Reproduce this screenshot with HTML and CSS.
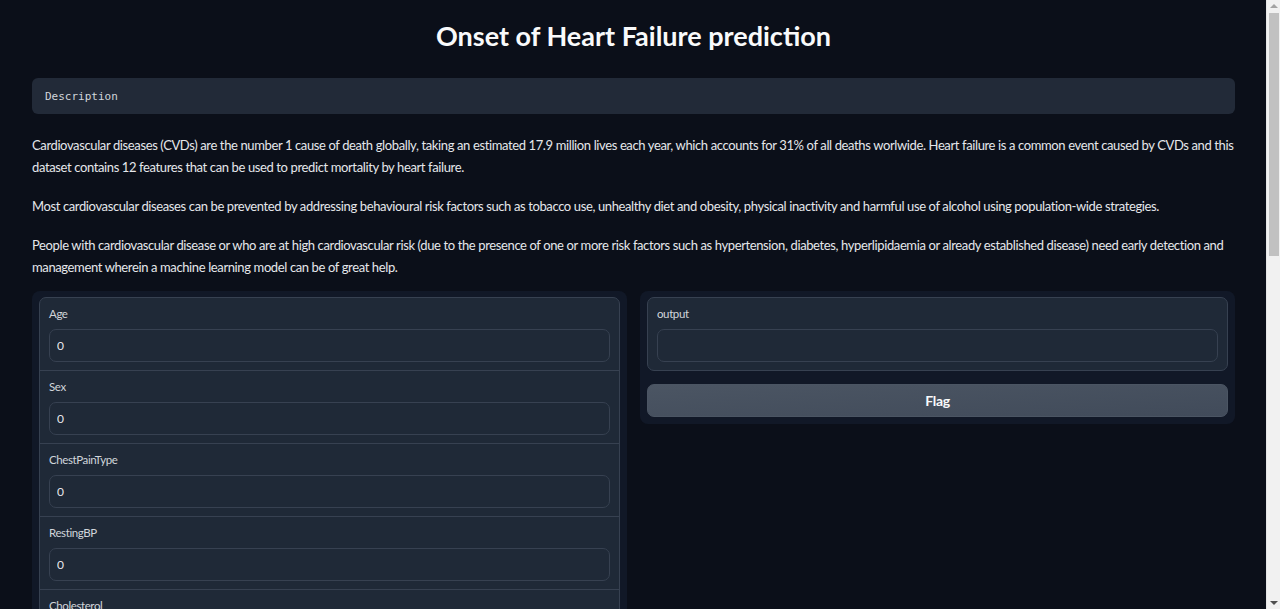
FILE: index.html
```html
<!DOCTYPE html>
<html lang="en">
<head>
<meta charset="utf-8">
<title>Onset of Heart Failure prediction</title>
<link rel="stylesheet" href="styles.css">
</head>
<body>
<div class="app">
  <h1 class="title">Onset of Heart Failure prediction</h1>
  <div class="desc-box">Description</div>
  <div class="article">
    <p>Cardiovascular diseases (CVDs) are the number 1 cause of death globally, taking an estimated 17.9 million lives each year, which accounts for 31% of all deaths worlwide. Heart failure is a common event caused by CVDs and this dataset contains 12 features that can be used to predict mortality by heart failure.</p>
    <p>Most cardiovascular diseases can be prevented by addressing behavioural risk factors such as tobacco use, unhealthy diet and obesity, physical inactivity and harmful use of alcohol using population-wide strategies.</p>
    <p>People with cardiovascular disease or who are at high cardiovascular risk (due to the presence of one or more risk factors such as hypertension, diabetes, hyperlipidaemia or already established disease) need early detection and management wherein a machine learning model can be of great help.</p>
  </div>
  <div class="columns">
    <div class="panel">
      <div class="form">
        <label class="field"><span class="label">Age</span><input class="input" type="text" value="0"></label>
        <label class="field"><span class="label">Sex</span><input class="input" type="text" value="0"></label>
        <label class="field"><span class="label">ChestPainType</span><input class="input" type="text" value="0"></label>
        <label class="field"><span class="label">RestingBP</span><input class="input" type="text" value="0"></label>
        <label class="field"><span class="label">Cholesterol</span><input class="input" type="text" value="0"></label>
        <label class="field"><span class="label">FastingBS</span><input class="input" type="text" value="0"></label>
      </div>
    </div>
    <div class="panel panel-right">
      <div class="form">
        <label class="field"><span class="label">output</span><input class="input" type="text" value=""></label>
      </div>
      <button class="flag">Flag</button>
    </div>
  </div>
</div>
<div class="scrollbar" aria-hidden="true">
  <div class="sb-arrow sb-up"></div>
  <div class="sb-thumb"></div>
  <div class="sb-arrow sb-down"></div>
</div>
</body>
</html>
```

FILE: styles.css
```css
html, body {
  margin: 0;
  padding: 0;
  background: #0b0f19;
}
body {
  font-family: "Lato", "Noto Sans", sans-serif;
  color: #e5e7eb;
}
.app {
  padding: 0 32px 40px 32px;
  margin-right: 13px;
}
.title {
  margin: 0;
  padding-top: 18px;
  height: 60px;
  box-sizing: border-box;
  text-align: center;
  font-size: 27px;
  font-weight: 700;
  color: #f9fafb;
  line-height: 36px;
}
.desc-box {
  height: 36px;
  box-sizing: border-box;
  margin-top: 18px;
  padding: 0 13px;
  display: flex;
  align-items: center;
  background: #222a38;
  border-radius: 6px;
  font-family: "DejaVu Sans Mono", "Liberation Mono", monospace;
  font-size: 11px;
  color: #d1d5db;
}
.article {
  padding-top: 20px;
  font-size: 13px;
  line-height: 22px;
  letter-spacing: -0.38px;
  color: #e5e7eb;
}
.article p {
  margin: 0 0 17px 0;
}
.article p:last-child {
  margin-bottom: 13px;
}
.columns {
  display: flex;
  gap: 13px;
}
.panel {
  flex: 1;
  min-width: 0;
  background: #111827;
  border-radius: 8px;
  padding: 6px 7px 7px 7px;
  display: flex;
  flex-direction: column;
  gap: 13px;
  align-self: flex-start;
}
.form {
  background: #1f2937;
  border: 1px solid #374151;
  border-radius: 7px;
  display: flex;
  flex-direction: column;
  overflow: hidden;
}
.field {
  display: flex;
  flex-direction: column;
  padding: 8px 9px 8px 9px;
  border-top: 1px solid #374151;
}
.field:first-child {
  border-top: none;
}
.label {
  font-size: 11.5px;
  line-height: 16px;
  letter-spacing: -0.4px;
  color: #d1d5db;
  margin-bottom: 7px;
}
.input {
  height: 33px;
  box-sizing: border-box;
  background: #1f2937;
  border: 1px solid #374151;
  border-radius: 7px;
  padding: 0 7px;
  font-family: inherit;
  font-size: 12px;
  color: #e5e7eb;
  outline: none;
}
.flag {
  height: 33px;
  border: 1px solid #4b5563;
  border-radius: 7px;
  background: linear-gradient(to bottom right, #4b5563, #414b5a);
  color: #f9fafb;
  font-family: inherit;
  font-size: 14px;
  font-weight: 700;
  letter-spacing: -0.3px;
  cursor: pointer;
}
.scrollbar {
  position: fixed;
  top: 0;
  right: 0;
  bottom: 0;
  width: 13px;
  background: #f1f1f1;
  border-left: 1px solid #e6e6e6;
}
.sb-thumb {
  position: absolute;
  top: 13px;
  left: 2px;
  right: 1px;
  height: 243px;
  background: #c1c1c1;
}
.sb-arrow {
  position: absolute;
  left: 3px;
  width: 0;
  height: 0;
  border-left: 4px solid transparent;
  border-right: 4px solid transparent;
}
.sb-up {
  top: 4px;
  border-bottom: 4px solid #a3a3a3;
}
.sb-down {
  bottom: 4px;
  border-top: 4px solid #505050;
}
```
